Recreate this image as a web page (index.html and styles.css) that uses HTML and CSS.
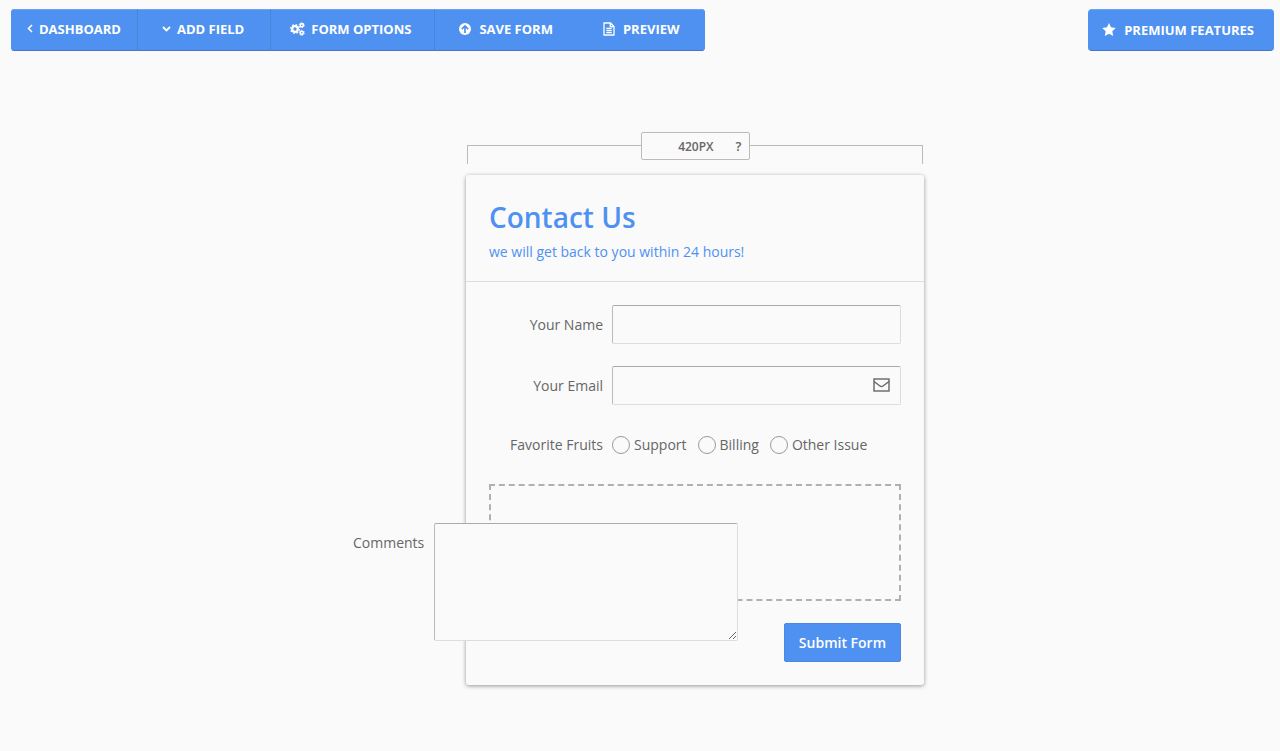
FILE: index.html
```html
<!DOCTYPE html>
<html lang="en">
<head>
  <meta charset="UTF-8" />
  <meta name="viewport" content="width=device-width, initial-scale=1.0"/>
  <title>Form Builder</title>
  <link rel="stylesheet" href="styles.css">
</head>
<body>

  <!-- Toolbar -->
  <header class="topbar">
    <nav class="toolbar">
      <a class="tool dashboard" href="#">
        <svg width="6" height="9" viewBox="0 0 6 9"><path d="M5 1L1.500 4.500L5 8" fill="none" stroke="currentColor" stroke-width="1.600"/></svg>
        Dashboard
      </a>
      <button class="tool add" type="button">
        <svg width="9" height="6" viewBox="0 0 9 6"><path d="M1 1L4.500 4.500L8 1" fill="none" stroke="currentColor" stroke-width="1.800"/></svg>
        Add Field
      </button>
      <button class="tool options" type="button">
        <svg width="15" height="14" viewBox="0 0 15 14" fill="none" stroke="currentColor">
          <circle cx="5" cy="7" r="2.800" stroke-width="2.200"/>
          <circle cx="5" cy="7" r="4.300" stroke-width="1.400" stroke-dasharray="1.700 1.677"/>
          <circle cx="11.800" cy="3.200" r="1.600" stroke-width="1.600"/>
          <circle cx="11.800" cy="3.200" r="2.500" stroke-width="1" stroke-dasharray="1.300 1.318"/>
          <circle cx="11.800" cy="10.800" r="1.600" stroke-width="1.600"/>
          <circle cx="11.800" cy="10.800" r="2.500" stroke-width="1" stroke-dasharray="1.300 1.318"/>
        </svg>
        Form Options
      </button>
      <button class="tool save" type="button">
        <svg width="12" height="12" viewBox="0 0 12 12"><circle cx="6" cy="6" r="6" fill="currentColor"/><path d="M6 10V3M2.800 6.200L6 3L9.200 6.200" fill="none" stroke="#4f91f0" stroke-width="1.700"/></svg>
        Save Form
      </button>
      <button class="tool preview" type="button">
        <svg width="12" height="14" viewBox="0 0 12 14" fill="none" stroke="currentColor" stroke-width="1.300"><path d="M1 1H7.500L11 4.500V13H1ZM7.300 1V4.700H11M3.300 6.500H8.700M3.300 8.600H8.700M3.300 10.700H8.700"/></svg>
        Preview
      </button>
    </nav>
    <a class="premium" href="#">
      <svg width="14" height="13" viewBox="0 0 14 13"><path d="M7 0L9 4.300L13.800 4.900L10.300 8.200L11.200 13L7 10.700L2.800 13L3.700 8.200L0.200 4.900L5 4.300Z" fill="currentColor"/></svg>
      Premium Features
    </a>
  </header>

  <main class="canvas">
    <div class="builder">

      <!-- Form width -->
      <div class="ruler">
        <span class="line left"></span>
        <div class="size"><span>420PX</span><button class="help" type="button">?</button></div>
        <span class="line right"></span>
      </div>

      <form class="form">
        <div class="form-head">
          <h1>Contact Us</h1>
          <p>we will get back to you within 24 hours!</p>
        </div>

        <div class="form-body">
          <div class="row">
            <label for="name">Your Name</label>
            <input class="text" type="text" id="name">
          </div>

          <div class="row">
            <label for="email">Your Email</label>
            <div class="with-icon">
              <input class="text" type="email" id="email">
              <svg class="mail" width="17" height="14" viewBox="0 0 17 14" fill="none" stroke="currentColor" stroke-width="1.400"><rect x="1" y="1" width="15" height="12"/><path d="M1 3.500L7 8Q8.500 9.200 10 8L16 3.500"/></svg>
            </div>
          </div>

          <div class="row" role="radiogroup" aria-labelledby="fruits">
            <span class="label" id="fruits">Favorite Fruits</span>
            <div class="choices">
              <label><input type="radio" name="topic">Support</label>
              <label><input type="radio" name="topic">Billing</label>
              <label><input type="radio" name="topic">Other Issue</label>
            </div>
          </div>

          <!-- Drop target with the field being dragged over it -->
          <div class="drop">
            <div class="dragged">
              <label for="comments">Comments</label>
              <textarea id="comments"></textarea>
            </div>
          </div>

          <button class="submit" type="submit">Submit Form</button>
        </div>
      </form>
    </div>
  </main>

</body>
</html>
```
FILE: styles.css
```css
* {
  box-sizing: border-box;
}
body {
  margin: 0;
  background: #fafafa;
  color: #666;
  font-family: "Open Sans", sans-serif;
  font-size: 14px;
}
button, input, textarea {
  font-family: inherit;
}
svg {
  flex: none;
}

/* Toolbar */
.topbar {
  display: flex;
  justify-content: space-between;
  padding: 9px 6px 0 11px;
}
.toolbar {
  display: flex;
  background: #4f91f0;
  border-radius: 4px;
  overflow: hidden;
}
.tool, .premium {
  display: flex;
  align-items: center;
  gap: 6px;
  height: 42px;
  color: #fff;
  background: #4f91f0;
  border: 0;
  border-top: 1px solid #6ba3f5;
  border-bottom: 1px solid #4478c0;
  font-size: 13px;
  font-weight: 700;
  text-transform: uppercase;
  text-decoration: none;
  white-space: nowrap;
  cursor: pointer;
}
.tool {
  padding: 0 16px 3px;
  border-right: 1px dotted #4478c0;
}
.add {
  padding: 0 26px 3px 24px;
}
.options {
  padding: 0 23px 3px 19px;
}
.save {
  gap: 8px;
  padding: 0 28px 3px 24px;
  border-right: 0;
}
.preview {
  gap: 8px;
  padding: 0 25px 3px 22px;
  border-right: 0;
}
.premium {
  gap: 8px;
  padding: 0 20px 1px 14px;
  border-radius: 4px;
}

/* Form width */
.canvas {
  display: flex;
  justify-content: center;
  padding: 81px 0 66px 110px;
}
.builder {
  width: 100%;
  max-width: 458px;
}
.ruler {
  display: flex;
  align-items: flex-end;
  height: 32px;
  margin: 0 1px 11px;
}
.line {
  flex: 1;
  height: 19px;
  border-top: 1px solid #bbb;
}
.left {
  border-left: 1px solid #bbb;
}
.right {
  border-right: 1px solid #bbb;
}
.size {
  display: flex;
  align-self: flex-start;
  align-items: center;
  justify-content: flex-end;
  gap: 22px;
  width: 109px;
  height: 28px;
  padding-right: 7px;
  border: 1px solid #bbb;
  border-radius: 2px;
  font-size: 12px;
  font-weight: 600;
}
.help {
  padding: 0;
  border: 0;
  background: none;
  color: inherit;
  font-size: 13px;
  font-weight: 600;
}

/* Form */
.form {
  background: #fafafa;
  border-radius: 3px;
  box-shadow: 0 1px 4px rgba(0,0,0,0.4);
}
.form-head {
  padding: 22px 23px 18px;
  border-bottom: 1px solid #ddd;
  color: #4f91f0;
}
.form-head h1 {
  margin: 0;
  font-size: 28px;
  line-height: 40px;
  font-weight: 600;
}
.form-head p {
  margin: 4px 0 0;
  line-height: 22px;
  font-weight: 500;
}
.form-body {
  display: flex;
  flex-direction: column;
  gap: 22px;
  padding: 23px;
}
.row {
  display: grid;
  grid-template-columns: 114px 1fr;
  align-items: center;
  column-gap: 9px;
}
.row > label, .label {
  text-align: right;
}
.text, textarea {
  display: block;
  width: 100%;
  height: 39px;
  padding: 8px;
  background: #fafafa;
  border: 1px solid #ddd;
  border-top-color: #aaa;
  border-left-color: #bbb;
  border-radius: 2px;
  font-size: 14px;
}
.with-icon {
  position: relative;
}
.mail {
  position: absolute;
  top: 12px;
  right: 11px;
}
.choices {
  display: flex;
  align-items: center;
  gap: 11px;
  height: 35px;
  white-space: nowrap;
}
.choices label {
  display: flex;
  align-items: center;
  gap: 4px;
}
.choices input {
  appearance: none;
  width: 18px;
  height: 18px;
  margin: 0;
  border: 1px solid #999;
  border-radius: 50%;
}
.choices input:checked {
  border: 5px solid #4f91f0;
}
.drop {
  position: relative;
  height: 117px;
  border: 2px dashed #b0b0b0;
}
.dragged {
  position: absolute;
  top: 37px;
  left: -138px;
  display: flex;
  gap: 10px;
}
.dragged label {
  padding-top: 10px;
}
.dragged textarea {
  width: 304px;
  height: 118px;
}
.submit {
  align-self: flex-end;
  height: 39px;
  padding: 0 14px;
  background: #4f91f0;
  border: 1px solid #4a88e4;
  border-radius: 2px;
  color: #fff;
  font-size: 14px;
  font-weight: 600;
  cursor: pointer;
}
```
